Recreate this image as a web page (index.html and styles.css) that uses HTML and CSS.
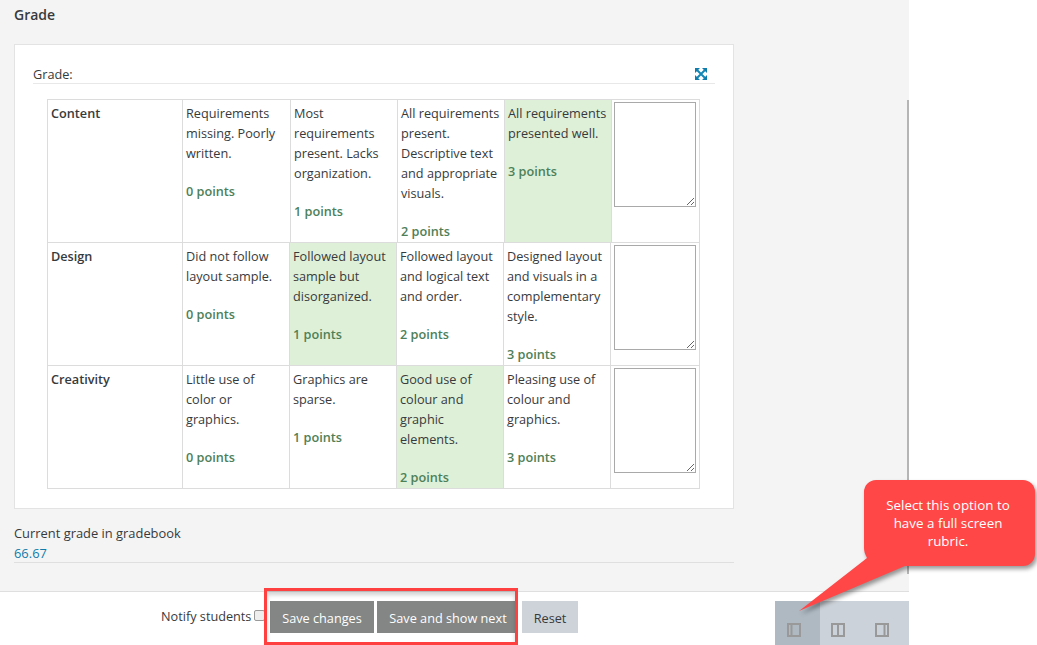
FILE: index.html
```html
<!DOCTYPE html>
<html lang="en">
<head>
<meta charset="utf-8">
<title>Grade</title>
<link rel="stylesheet" href="styles.css">
</head>
<body>
<div class="page">
  <main class="main">
    <h3 class="title">Grade</h3>
    <section class="card">
      <div class="grade-head">
        <span>Grade:</span>
        <svg class="expand" viewBox="0 0 12 12" width="12" height="12"><path fill="#0f7bab" d="M0 0h5L0 5zM12 0v5L7 0zM0 12V7l5 5zM12 12H7l5-5z"/><path fill="none" stroke="#1487b5" stroke-width="2" d="M2 2l8 8M10 2l-8 8"/></svg>
      </div>
      <div class="rubric">
        <div class="row row-first">
          <div class="cell head">Content</div>
          <div class="cell"><p>Requirements missing. Poorly written.</p><b>0 points</b></div>
          <div class="cell"><p>Most requirements present. Lacks organization.</p><b>1 points</b></div>
          <div class="cell"><p>All requirements present. Descriptive text and appropriate visuals.</p><b>2 points</b></div>
          <div class="cell picked"><p>All requirements presented well.</p><b>3 points</b></div>
          <div class="cell note"><textarea></textarea></div>
        </div>
        <div class="row row-mid">
          <div class="cell head">Design</div>
          <div class="cell"><p>Did not follow layout sample.</p><b>0 points</b></div>
          <div class="cell picked"><p>Followed layout sample but disorganized.</p><b>1 points</b></div>
          <div class="cell"><p>Followed layout and logical text and order.</p><b>2 points</b></div>
          <div class="cell"><p>Designed layout and visuals in a complementary style.</p><b>3 points</b></div>
          <div class="cell note"><textarea></textarea></div>
        </div>
        <div class="row row-mid">
          <div class="cell head">Creativity</div>
          <div class="cell"><p>Little use of color or graphics.</p><b>0 points</b></div>
          <div class="cell"><p>Graphics are sparse.</p><b>1 points</b></div>
          <div class="cell picked"><p>Good use of colour and graphic elements.</p><b>2 points</b></div>
          <div class="cell"><p>Pleasing use of colour and graphics.</p><b>3 points</b></div>
          <div class="cell note"><textarea></textarea></div>
        </div>
      </div>
    </section>
    <div class="current">
      <div>Current grade in gradebook</div>
      <a class="value">66.67</a>
    </div>
  </main>
  <footer class="footer">
    <div class="actions">
      <label class="notify">Notify students<span class="check"></span></label>
      <button class="btn dark">Save changes</button>
      <button class="btn dark next">Save and show next</button>
      <button class="btn light">Reset</button>
    </div>
    <div class="layouts">
      <span class="layout active"><svg viewBox="0 0 14 14" width="14" height="14"><path fill="none" stroke="#999" stroke-width="2" d="M1 1h12v12H1zM4.500 1v12"/></svg></span>
      <span class="layout"><svg viewBox="0 0 14 14" width="14" height="14"><path fill="none" stroke="#999" stroke-width="2" d="M1 1h12v12H1zM7 1v12"/></svg></span>
      <span class="layout"><svg viewBox="0 0 14 14" width="14" height="14"><path fill="none" stroke="#999" stroke-width="2" d="M1 1h12v12H1zM9.500 1v12"/></svg></span>
    </div>
  </footer>
  <div class="scrollbar"></div>
  <div class="redbox"></div>
  <div class="callout">
    <svg class="callout-shape" viewBox="0 0 242 140" width="242" height="140"><path fill="#ff4747" d="M81 5H228a12 12 0 0 1 12 12V79a12 12 0 0 1-12 12H110L4 136 72 83C70 79 69 77 69 72V17a12 12 0 0 1 12-12Z"/></svg>
    <div class="callout-text">Select this option to have a full screen rubric.</div>
  </div>
</div>
</body>
</html>
```
FILE: styles.css
```css
* { box-sizing: border-box; }
html, body { margin: 0; height: 100%; background: #fff; overflow: hidden; }
body { font-family: "Open Sans", "Noto Sans", sans-serif; font-size: 12.7px; line-height: 20px; color: #373a3c; }
.page { position: relative; width: 1037px; height: 645px; overflow: hidden; }
.main { width: 909px; height: 592px; background: #f4f4f4; border-bottom: 1px solid #dfdfdf; padding: 5px 175px 0 14px; }
.title { margin: 0 0 19px; font-size: 14px; line-height: 20px; font-weight: 600; }
.card { height: 465px; background: #fff; border: 1px solid #e3e3e3; padding: 19px 18px 0; }
.grade-head { display: flex; justify-content: space-between; align-items: center; width: 682px; height: 20px; padding-right: 8px; border-bottom: 1px solid #e8e8e8; }
.expand { margin-top: 1px; }
.rubric { margin: 15px 0 0 14px; width: 653px; border: 1px solid #dcdcdc; }
.row { display: grid; height: 123px; border-top: 1px solid #dcdcdc; }
.row-first { height: 142px; border-top: 0; grid-template-columns: 134px 108px 107px 107px 107px 88px; }
.row-mid { grid-template-columns: 134px 107px 107px 107px 107px 89px; }
.cell { padding: 3px 2px 0 3px; border-left: 1px solid #dcdcdc; }
.cell:first-child { border-left: 0; }
.head { font-weight: 600; }
.cell p { margin: 0 0 18px; }
.cell b { display: block; font-weight: 600; color: #4e8058; }
.picked { background: #dff0d8; }
.note { padding: 2px 0 0 3px; }
.row-first .note { padding-left: 2px; }
.note textarea { display: block; width: 82px; height: 105px; border: 1px solid #a9a9a9; border-radius: 0; background: #fff; padding: 0; margin: 0; }
.current { margin-top: 14px; width: 720px; height: 40px; font-size: 12.9px; border-bottom: 1px solid #dfdfdf; }
.value { color: #0f7bab; }
.footer { display: flex; height: 53px; padding-top: 9px; }
.actions { display: flex; width: 775px; align-items: flex-start; padding-left: 161px; }
.notify { display: flex; width: 109px; padding-top: 5px; }
.check { width: 11px; height: 11px; margin: 4px 0 0 3px; border: 1px solid #999; border-radius: 2px; background: #eee; }
.btn { height: 32px; border: 0; padding: 2px 0 0; font: inherit; text-align: center; }
.dark { width: 104px; background: #838685; color: #fff; margin-right: 3px; }
.next { width: 138px; margin-right: 7px; padding-left: 4px; }
.light { width: 56px; background: #ced3da; color: #373a3c; }
.layouts { display: flex; width: 134px; height: 44px; background: #ccd2d9; }
.layout { display: flex; align-items: flex-start; justify-content: center; width: 44px; padding: 22px 8px 0 0; }
.layout.active { width: 45px; padding-right: 7px; background: #aeb9c2; }
.scrollbar { position: absolute; left: 907px; top: 100px; width: 2px; height: 474px; background: #b5b5b5; }
.redbox { position: absolute; left: 264px; top: 588px; width: 254px; height: 57px; border: 3px solid #fe4040; box-shadow: inset 0 4px 4px rgba(0,0,0,.18); }
.callout { position: absolute; left: 795px; top: 475px; width: 242px; height: 140px; }
.callout-shape { position: absolute; left: 0; top: 0; overflow: visible; filter: drop-shadow(2px 3px 2px rgba(0,0,0,.4)); }
.callout-text { position: absolute; left: 83px; top: 21px; width: 140px; color: #fff; font-size: 13.4px; line-height: 18px; text-align: center; }
```
